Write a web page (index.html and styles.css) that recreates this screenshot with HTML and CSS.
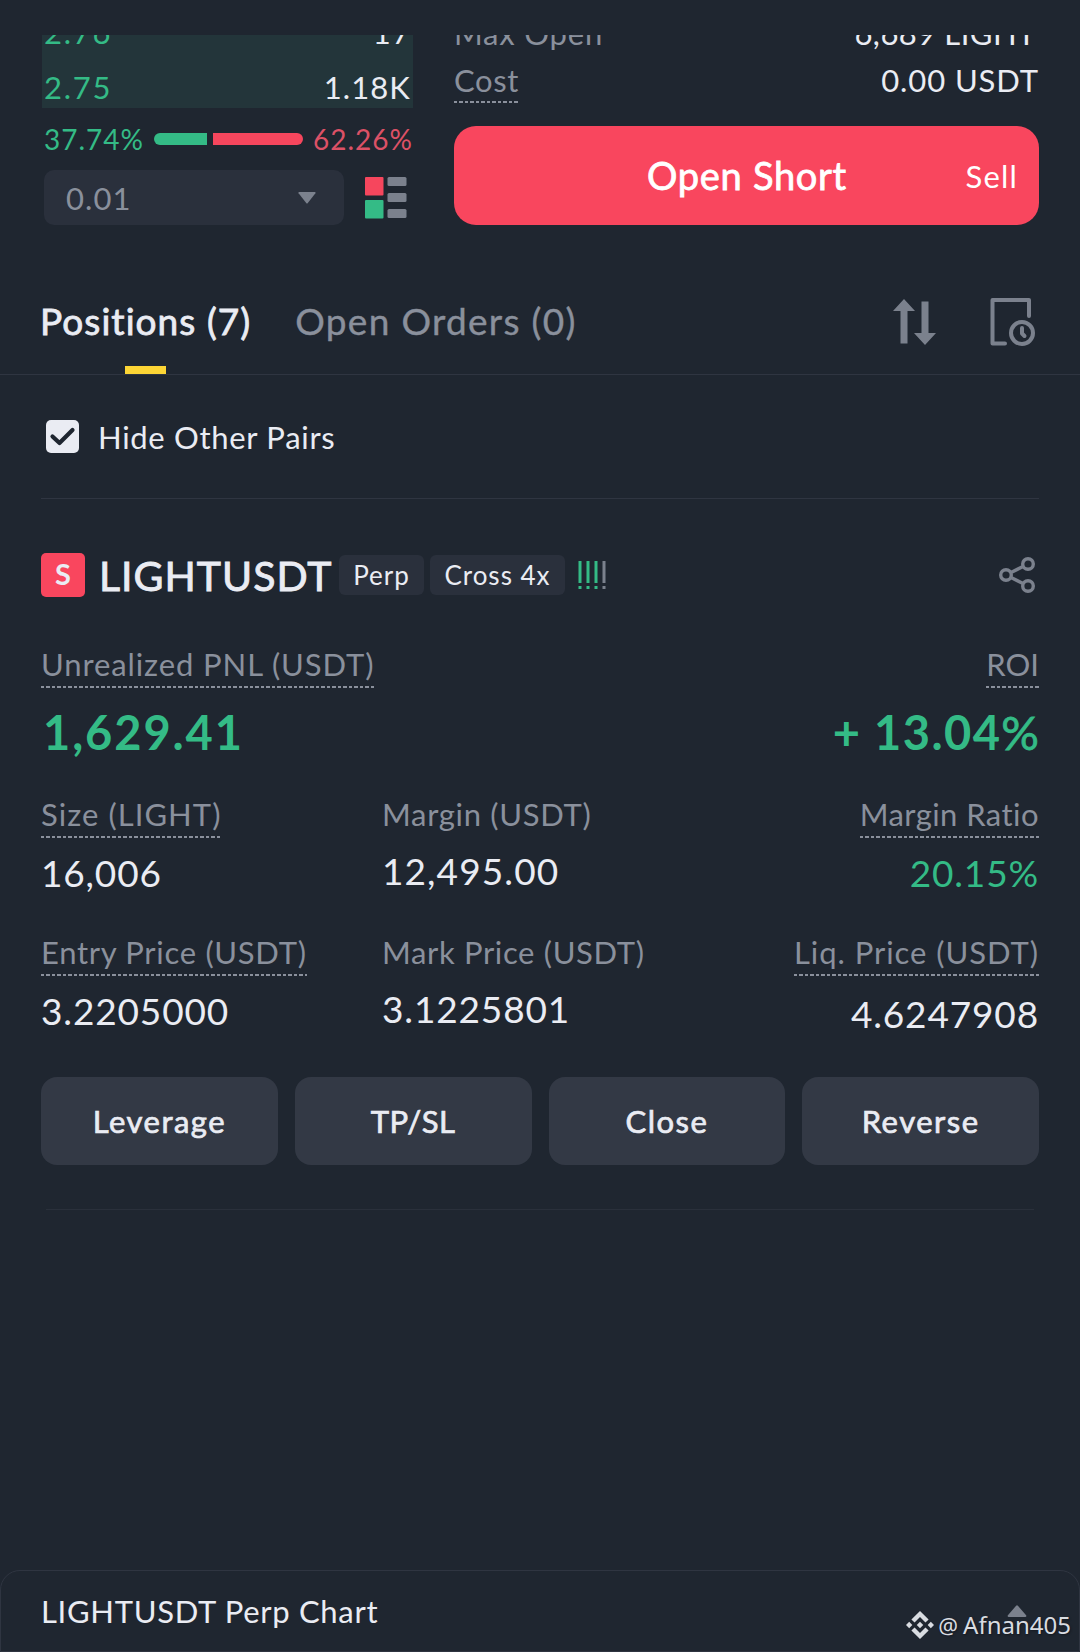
FILE: index.html
```html
<!DOCTYPE html>
<html lang="en">
<head>
    <meta charset="UTF-8">
    <meta name="viewport" content="width=device-width, initial-scale=1.0">
    <title>LIGHTUSDT Perp</title>

    <link rel="stylesheet" href="styles.css">
</head>
<body>
    <div class="trade">
        <div class="book">
            <div class="book-rows">
                <div class="book-row"><span class="green bid">2.76</span><span>17</span></div>
                <div class="book-row"><span class="green bid">2.75</span><span>1.18K</span></div>
            </div>
            <div class="ratio">
                <span class="green">37.74%</span>
                <div class="ratio-bar"><i class="buy"></i><i class="sell"></i></div>
                <span class="red">62.26%</span>
            </div>
            <div class="book-tools">
                <div class="select">
                    <span>0.01</span>
                    <svg width="18" height="12" viewBox="0 0 18 12"><path d="M1 0h16q1 .5.4 1.300L9.600 11.200q-.6.700-1.200 0L.6 1.300Q0 .5 1 0z" fill="#7b818d"/></svg>
                </div>
                <svg class="depth-icon" width="42" height="42" viewBox="0 0 42 42">
                    <rect x="0" y="0" width="18.500" height="18.500" rx="1" fill="#f6465d"/>
                    <rect x="0" y="23" width="18.500" height="18.500" rx="1" fill="#34bb86"/>
                    <rect x="22.500" y="0" width="19" height="9" rx="1.500" fill="#7b818d"/>
                    <rect x="22.500" y="16" width="19" height="9" rx="1.500" fill="#7b818d"/>
                    <rect x="22.500" y="32" width="19" height="9" rx="1.500" fill="#7b818d"/>
                </svg>
            </div>
        </div>

        <div class="order">
            <div class="order-row"><span class="muted">Max Open</span><span class="max-value">6,689 LIGHT</span></div>
            <div class="order-row"><span class="muted dotted cost">Cost</span><span class="cost-value">0.00 USDT</span></div>
            <button class="short-button"><span class="short-text">Open Short</span><span class="short-side">Sell</span></button>
        </div>
    </div>

    <div class="tabs">
        <div class="tab active">Positions (7)</div>
        <div class="tab orders">Open Orders (0)</div>
        <svg class="sort-icon" width="43" height="46" viewBox="0 0 43 46" fill="#7b818d">
            <path d="M11 0 22 12H14.500V44.500H7.500V12H0z"/>
            <path d="M32 46 21 34H28.500V2.500H35.500V34H43z"/>
        </svg>
        <svg class="history-icon" width="46" height="50" viewBox="0 0 46 50" fill="none" stroke="#7b818d" stroke-width="4" stroke-linecap="round" stroke-linejoin="round">
            <path d="M39 19V3H2.500V46.500H15"/>
            <circle cx="32" cy="36" r="11"/>
            <path d="M32 31v5.500l2.500 2.500"/>
        </svg>
    </div>

    <div class="filter">
        <svg width="33" height="33" viewBox="0 0 33 33">
            <rect width="33" height="33" rx="5" fill="#eaecf3"/>
            <path d="M6.500 16.500l7 6.500L26.500 10" fill="none" stroke="#1f2630" stroke-width="4.200" stroke-linecap="round" stroke-linejoin="round"/>
        </svg>
        <span class="filter-text">Hide Other Pairs</span>
    </div>

    <div class="position">
        <div class="head">
            <span class="side">S</span>
            <span class="symbol">LIGHTUSDT</span>
            <span class="chip perp">Perp</span>
            <span class="chip cross">Cross 4x</span>
            <svg class="risk" width="28" height="28" viewBox="0 0 28 28" fill="#34bb86">
                <path d="M.5 0h3v22h-3zM8.500 0h3v22h-3zM16.500 0h3v22h-3zM.5 25h3v3h-3zM8.500 25h3v3h-3zM16.500 25h3v3h-3z"/>
                <path d="M24.500 0h3v22h-3zM24.500 25h3v3h-3z" fill="#7b818d"/>
            </svg>
            <svg class="share" width="36" height="36" viewBox="0 0 36 36" fill="none" stroke="#7b818d" stroke-width="3.400">
                <circle cx="7" cy="18" r="5.300"/>
                <circle cx="29" cy="7" r="5.300"/>
                <circle cx="29" cy="29" r="5.300"/>
                <path d="M12 15.500l12-6M12 20.500l12 6"/>
            </svg>
        </div>

        <div class="pnl">
            <div>
                <div class="label dotted l-pnl">Unrealized PNL (USDT)</div>
                <div class="big big-pnl">1,629.41</div>
            </div>
            <div class="right">
                <div class="label dotted l-roi">ROI</div>
                <div class="big">+ 13.04<span class="percent">%</span></div>
            </div>
        </div>

        <div class="stats">
            <div>
                <div class="label dotted l-size">Size (LIGHT)</div>
                <div class="value">16,006</div>
            </div>
            <div>
                <div class="label">Margin (USDT)</div>
                <div class="value v-margin">12,495.00</div>
            </div>
            <div class="right">
                <div class="label dotted l-ratio">Margin Ratio</div>
                <div class="value green">20.15%</div>
            </div>
            <div>
                <div class="label dotted">Entry Price (USDT)</div>
                <div class="value">3.2205000</div>
            </div>
            <div>
                <div class="label l-mark">Mark Price (USDT)</div>
                <div class="value">3.1225801</div>
            </div>
            <div class="right">
                <div class="label dotted l-liq">Liq. Price (USDT)</div>
                <div class="value v-liq">4.6247908</div>
            </div>
        </div>

        <div class="actions">
            <button>Leverage</button>
            <button class="tpsl">TP/SL</button>
            <button>Close</button>
            <button>Reverse</button>
        </div>
        <div class="line"></div>
    </div>

    <div class="chart-bar">
        <span class="chart-title">LIGHTUSDT Perp Chart</span>
        <svg class="expand" width="20" height="12" viewBox="0 0 20 12"><path d="M1.500 12h17q1.500-.5.600-1.800L10.900.8Q10-.3 9.100.8L.9 10.200Q0 11.500 1.500 12z" fill="#7b818d"/></svg>
    </div>

    <div class="watermark">
        <svg width="28" height="28" viewBox="0 0 28 28" fill="#d9dce1">
            <path d="M8.560 11.560 14 6.120l5.450 5.450 3.170-3.170L14 0 5.400 8.400z"/>
            <path d="M0 14l3.170-3.170L6.340 14l-3.170 3.170z"/>
            <path d="M8.560 16.440 14 21.880l5.450-5.450 3.170 3.160L14 28 5.400 19.600z"/>
            <path d="M21.660 14l3.170-3.170L28 14l-3.170 3.170z"/>
            <path d="M17.220 14 14 10.780 10.780 14 14 17.220z"/>
        </svg>
        <span class="wm-at">@</span>
        <span>Afnan405</span>
    </div>
</body>
</html>
```

FILE: styles.css
```css
* {
    box-sizing: border-box;
}
body {
    margin: 0;
    height: 1652px;
    position: relative;
    overflow: hidden;
    display: flex;
    flex-direction: column;
    background-color: #1f2630;
    color: #eaecf3;
    font-family: Lato, "Open Sans", sans-serif;
    font-size: 31px;
}
button {
    border: none;
    padding: 0;
    font-family: inherit;
    color: inherit;
}
svg {
    display: block;
    flex: none;
}
.green {
    color: #34bb86;
}
.red {
    color: #dc5166;
}
.muted {
    color: #8a909c;
}
.right {
    text-align: right;
}

/* dashed hint underline */
.dotted {
    background: repeating-linear-gradient(90deg, #8a909c 0 3.3px, transparent 3.3px 5.5px) left bottom / 100% 2px no-repeat;
}

/* order book and order form */
.trade {
    display: flex;
    height: 190px;
    margin-top: 35px;
    padding: 0 41px 0 42px;
}
.book {
    width: 371px;
    margin-right: 41px;
    letter-spacing: 1.1px;
}
.book-rows {
    height: 73px;
    overflow: hidden;
    background-color: #23353a;
}
.book-row {
    display: flex;
    justify-content: space-between;
    padding: 0 2px;
    line-height: 55px;
}
.book-row:first-child {
    margin-top: -30px;
}
.bid {
    letter-spacing: 1.7px;
}
.ratio {
    display: flex;
    align-items: center;
    justify-content: space-between;
    height: 62px;
    padding-left: 2px;
    font-size: 28px;
    letter-spacing: 1px;
}
.ratio-bar {
    display: flex;
    gap: 6px;
    width: 149px;
}
.ratio-bar i {
    height: 12px;
}
.buy {
    width: 53px;
    background-color: #34bb86;
    border-radius: 6px 0 0 6px;
}
.sell {
    flex: 1;
    background-color: #f6465d;
    border-radius: 0 6px 6px 0;
}
.book-tools {
    display: flex;
    align-items: center;
    padding-left: 2px;
}
.select {
    display: flex;
    align-items: center;
    justify-content: space-between;
    width: 300px;
    height: 55px;
    padding: 0 28px 0 22px;
    border-radius: 10px;
    background-color: #2a303c;
    color: #8a909c;
}
.depth-icon {
    margin-left: 21px;
}
.order {
    flex: 1;
    overflow: hidden;
}
.order-row {
    display: flex;
    justify-content: space-between;
    height: 47px;
    line-height: 48px;
    letter-spacing: .8px;
}
.order-row:first-child {
    margin-top: -26px;
}
.max-value {
    margin-right: 3px;
    letter-spacing: .5px;
}
.cost {
    letter-spacing: .6px;
}
.cost-value {
    letter-spacing: .9px;
}
.short-button {
    display: flex;
    align-items: center;
    justify-content: center;
    position: relative;
    width: 100%;
    height: 99px;
    margin-top: 23px;
    border-radius: 22px;
    background-color: #f9465e;
    color: white;
}
.short-text {
    padding-left: 1px;
    padding-bottom: 2px;
    font-size: 38px;
    letter-spacing: .7px;
    -webkit-text-stroke: .8px;
}
.short-side {
    position: absolute;
    right: 21px;
    font-size: 31px;
    letter-spacing: 1.2px;
}

/* tabs */
.tabs {
    display: flex;
    align-items: center;
    height: 107px;
    margin-top: 43px;
    padding: 0 44px 0 41px;
    border-bottom: 1px solid #2f3541;
}
.tab {
    position: relative;
    font-size: 37px;
    line-height: 106px;
}
.active {
    margin-left: -1px;
    margin-right: 44px;
    letter-spacing: 1.05px;
    -webkit-text-stroke: .8px;
}
.active::after {
    content: "";
    position: absolute;
    left: 50%;
    bottom: 0;
    width: 41px;
    height: 8px;
    margin-left: -21px;
    background-color: #fcd535;
}
.orders {
    color: #8a909c;
    letter-spacing: 1.3px;
    -webkit-text-stroke: .4px;
}
.sort-icon {
    margin-top: 1px;
    margin-left: auto;
    margin-right: 54px;
}
.history-icon {
    margin-top: 1px;
}

.filter {
    display: flex;
    align-items: center;
    height: 124px;
    margin: 0 41px;
    padding-left: 5px;
    border-bottom: 1px solid #2f3541;
}
.filter-text {
    margin-left: 19px;
    padding-top: 1px;
    letter-spacing: .7px;
}

/* position card */
.position {
    padding: 54px 41px 0;
}
.head {
    display: flex;
    align-items: center;
    height: 44px;
}
.side {
    width: 44px;
    height: 44px;
    border-radius: 5px;
    background-color: #f9465e;
    font-size: 29px;
    font-weight: 700;
    line-height: 42px;
    text-align: center;
}
.symbol {
    width: 240px;
    margin-left: 14px;
    font-size: 41px;
    letter-spacing: 1px;
    -webkit-text-stroke: .9px;
}
.chip {
    height: 40px;
    border-radius: 6px;
    background-color: #2a303c;
    font-size: 26px;
    line-height: 41px;
    letter-spacing: 1px;
    text-align: center;
}
.perp {
    width: 85px;
}
.cross {
    width: 135px;
    margin-left: 6px;
}
.risk {
    margin-left: 13px;
}
.share {
    margin-left: auto;
    margin-right: 4px;
}
.pnl {
    display: flex;
    justify-content: space-between;
    margin-top: 49px;
}
.label {
    width: fit-content;
    height: 40px;
    line-height: 36px;
    color: #8a909c;
    letter-spacing: .7px;
    white-space: nowrap;
}
.label.dotted {
    height: 42px;
}
.right .label {
    margin-left: auto;
}
.label.l-pnl {
    letter-spacing: .9px;
}
.label.l-roi {
    letter-spacing: 0;
}
.label.l-size {
    letter-spacing: 1.05px;
}
.label.l-ratio {
    letter-spacing: .45px;
}
.label.l-mark {
    letter-spacing: .65px;
}
.label.l-liq {
    letter-spacing: .95px;
}
.big {
    height: 50px;
    margin-top: 18px;
    font-size: 47px;
    font-weight: 700;
    line-height: 52px;
    letter-spacing: 1.4px;
    color: #34bb86;
}
.big-pnl {
    padding-left: 2px;
    letter-spacing: 1.9px;
}
.percent {
    font-weight: 400;
    letter-spacing: 0;
    -webkit-text-stroke: .8px;
}
.stats {
    display: grid;
    grid-template-columns: 341px 342px 1fr;
    row-gap: 41px;
    margin-top: 40px;
}
.value {
    height: 40px;
    margin-top: 15px;
    font-size: 37px;
    line-height: 40px;
    letter-spacing: .85px;
}
.v-margin {
    letter-spacing: 1.1px;
}
.v-liq {
    padding-top: 3px;
}
.actions {
    display: grid;
    grid-template-columns: repeat(4, 1fr);
    gap: 17px;
    margin-top: 46px;
}
.actions button {
    height: 88px;
    border-radius: 16px;
    background-color: #333945;
    font-size: 31px;
    letter-spacing: 1.5px;
    -webkit-text-stroke: .7px;
}
.actions .tpsl {
    letter-spacing: .5px;
}
.line {
    height: 1px;
    margin: 44px 5px 0;
    background-color: #2a303b;
}

/* bottom bar */
.chart-bar {
    display: flex;
    justify-content: space-between;
    height: 82px;
    margin-top: auto;
    padding: 21px 52px 0 40px;
    border: 1px solid #2f3541;
    border-radius: 20px 20px 0 0;
}
.chart-title {
    letter-spacing: .7px;
}
.expand {
    margin-top: 13px;
}
.watermark {
    position: absolute;
    right: 9px;
    bottom: 11px;
    display: flex;
    align-items: center;
    color: #d9dce1;
    font-family: "Noto Sans", sans-serif;
    font-size: 24px;
    text-shadow: 1px 1px 2px #14181f;
}
.wm-at {
    margin: 0 5px 0 4px;
    font-size: 22px;
}
```
